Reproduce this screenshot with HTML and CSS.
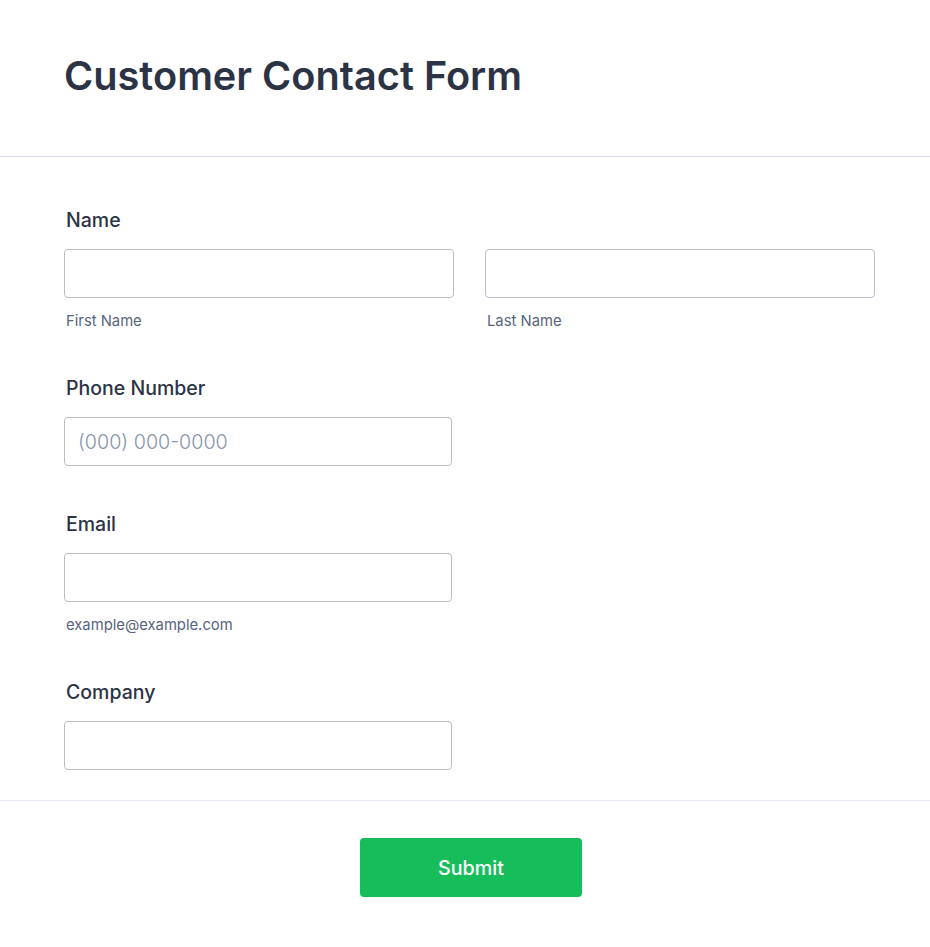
FILE: index.html
```html
<!DOCTYPE html>
<html lang="en">
<head>
<meta charset="utf-8">
<title>Customer Contact Form</title>
<link rel="stylesheet" href="styles.css">
</head>
<body>
<form class="form">
  <header class="form-header">
    <h1 class="form-title">Customer Contact Form</h1>
  </header>
  <div class="form-body">
    <div class="field">
      <label class="field-label">Name</label>
      <div class="name-row">
        <div class="sub">
          <input class="input input-wide" type="text">
          <span class="sublabel">First Name</span>
        </div>
        <div class="sub">
          <input class="input input-wide" type="text">
          <span class="sublabel">Last Name</span>
        </div>
      </div>
    </div>
    <div class="field">
      <label class="field-label">Phone Number</label>
      <input class="input" type="tel" placeholder="(000) 000-0000">
    </div>
    <div class="field">
      <label class="field-label">Email</label>
      <input class="input" type="email">
      <span class="sublabel">example@example.com</span>
    </div>
    <div class="field">
      <label class="field-label">Company</label>
      <input class="input" type="text">
    </div>
  </div>
  <footer class="form-footer">
    <button class="submit" type="button">Submit</button>
  </footer>
</form>
</body>
</html>
```
FILE: styles.css
```css
* { box-sizing: border-box; }
html, body { margin: 0; padding: 0; background: #ffffff; }
body {
  font-family: Inter, "Noto Sans", "Liberation Sans", sans-serif;
  color: #2c3345;
}
.form-header {
  padding: 52px 64px 56px 64px;
  border-bottom: 1px solid #d9dbe8;
}
.form-title {
  margin: 0;
  font-size: 39.7px;
  line-height: 48px;
  font-weight: 600;
  color: #2c3345;
}
.form-body {
  padding: 51px 52px 30px 64px;
  border-bottom: 1px solid #e6e8f3;
  display: flex;
  flex-direction: column;
  gap: 46px;
}
.field { display: flex; flex-direction: column; align-items: flex-start; }
.field-label {
  font-size: 19.5px;
  line-height: 24px;
  font-weight: 500;
  padding-left: 2px;
  margin-bottom: 17px;
  color: #2c3345;
}
.name-row {
  display: grid;
  grid-template-columns: 390px 390px;
  column-gap: 31px;
}
.sub { display: flex; flex-direction: column; }
.input {
  width: 388px;
  height: 49px;
  border: 1px solid #b8bdc9;
  border-radius: 4px;
  padding: 0 13px;
  font-family: Inter, "Noto Sans", "Liberation Sans", sans-serif;
  font-size: 19.7px;
  font-weight: 300;
  color: #2c3345;
  background: #ffffff;
  outline: none;
}
.input-wide { width: 390px; }
.input::placeholder { color: #8894ab; opacity: 1; }
.sublabel {
  margin-top: 14px;
  padding-left: 2px;
  font-size: 14.8px;
  line-height: 18px;
  color: #57647e;
}
.form-footer {
  padding: 37px 52px 50px 64px;
  display: flex;
  justify-content: center;
}
.submit {
  width: 222px;
  height: 59px;
  border: none;
  border-radius: 4px;
  background: #18bd5b;
  color: #ffffff;
  font-family: Inter, "Noto Sans", "Liberation Sans", sans-serif;
  font-size: 19.7px;
  font-weight: 500;
  cursor: pointer;
}
```
